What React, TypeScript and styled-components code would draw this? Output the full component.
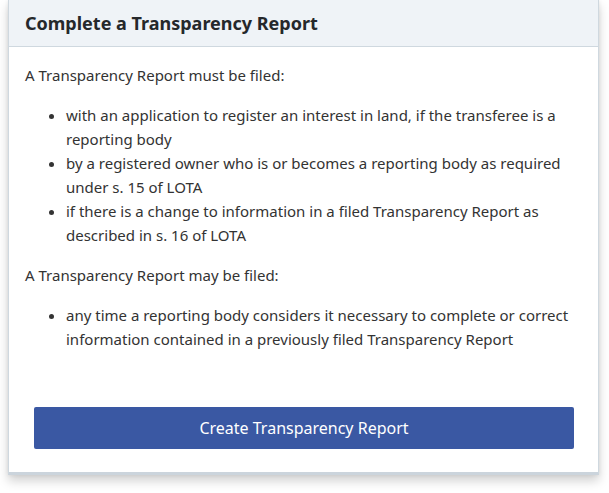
import styled, { createGlobalStyle } from "styled-components";

const GlobalStyle = createGlobalStyle`
  html, body {
    margin: 0;
    padding: 0;
    background: #ffffff;
  }
  body {
    font-family: "Noto Sans", "Open Sans", Arial, sans-serif;
    color: #333333;
  }
`;

const Page = styled.div`
  padding: 0 10px 18px 8px;
`;

const Card = styled.section`
  background: #ffffff;
  border: 1px solid #cfd8df;
  border-top: none;
  border-bottom: 3px solid #cbd4dc;
  box-shadow: 0 6px 10px rgba(0, 0, 0, 0.18), 0 0 4px rgba(0, 0, 0, 0.08);
`;

const Header = styled.header`
  background: #eff3f7;
  border-bottom: 1px solid #cfd8df;
  height: 46px;
  display: flex;
  align-items: center;
  padding: 0 16px;
`;

const Title = styled.h2`
  margin: 0;
  font-size: 18px;
  font-weight: 700;
  color: #25282b;
`;

const Body = styled.div`
  padding: 16px 16px 23px;
  font-size: 15px;
  line-height: 24px;
`;

const Paragraph = styled.p`
  margin: 0 0 16px;
`;

const List = styled.ul`
  margin: 0 0 16px;
  padding-left: 41px;
`;

const Item = styled.li`
  margin: 0;
`;

const Actions = styled.div`
  padding: 40px 8px 0 9px;
`;

const Button = styled.button`
  display: block;
  width: 100%;
  height: 42px;
  border: none;
  border-radius: 2px;
  background: #3a58a3;
  color: #ffffff;
  font-family: "Noto Sans", "Open Sans", Arial, sans-serif;
  font-size: 16px;
  cursor: pointer;

  &:hover {
    background: #314c8f;
  }
`;

export default function App() {
  return (
    <>
      <GlobalStyle />
      <Page>
        <Card>
          <Header>
            <Title>Complete a Transparency Report</Title>
          </Header>
          <Body>
            <Paragraph>A Transparency Report must be filed:</Paragraph>
            <List>
              <Item>
                with an application to register an interest in land, if the transferee is a
                reporting body
              </Item>
              <Item>
                by a registered owner who is or becomes a reporting body as required under s. 15
                of LOTA
              </Item>
              <Item>
                if there is a change to information in a filed Transparency Report as described in
                s. 16 of LOTA
              </Item>
            </List>
            <Paragraph>A Transparency Report may be filed:</Paragraph>
            <List>
              <Item>
                any time a reporting body considers it necessary to complete or correct information
                contained in a previously filed Transparency Report
              </Item>
            </List>
            <Actions>
              <Button type="button">Create Transparency Report</Button>
            </Actions>
          </Body>
        </Card>
      </Page>
    </>
  );
}
